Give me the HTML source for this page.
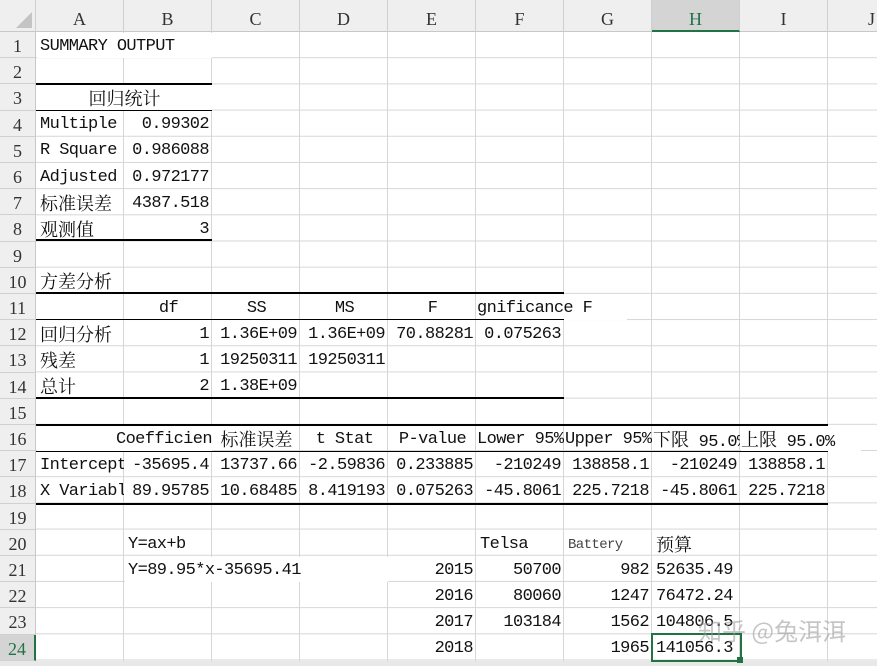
<!DOCTYPE html>
<html><head><meta charset="utf-8"><style>
*{margin:0;padding:0;box-sizing:border-box}
body{width:877px;height:666px;overflow:hidden;background:#fff;position:relative;font-family:"Liberation Mono","Noto Serif CJK SC",monospace;font-size:17px;letter-spacing:-0.6px;color:#111}
.grid{position:absolute;left:36px;top:32px;width:841px;height:630px;
background-image:linear-gradient(to right,#d6d6d6 1px,transparent 1px),linear-gradient(to bottom,#d6d6d6 1px,transparent 1px);
background-size:88px 26.2px;background-position:-1px -1px}
.colh{position:absolute;top:0;height:32px;background:#efefef;border-right:1px solid #d0d0d0;border-bottom:1px solid #c8c8c8;text-align:center;line-height:38px;font-family:"Liberation Serif",serif;font-size:18px;letter-spacing:0;color:#333}
.rowh{position:absolute;left:0;width:36px;background:#efefef;border-bottom:1px solid #d0d0d0;border-right:1px solid #c8c8c8;text-align:center;font-family:"Liberation Serif",serif;font-size:18px;letter-spacing:0;color:#333}
.c{position:absolute;height:25px;line-height:28px;white-space:nowrap;overflow:hidden;padding:0 3px}
.r{text-align:right}.m{text-align:center}
.k{font-family:"Liberation Serif","Noto Serif CJK SC",serif;font-size:18px;letter-spacing:0}
.ln{position:absolute;background:#000}
</style></head><body>
<div class="grid"></div>
<div class="colh" style="left:0;width:36px"><div style="position:absolute;right:3px;bottom:3px;width:0;height:0;border-left:16px solid transparent;border-bottom:16px solid #c4c4c4"></div></div>
<div class="colh" style="left:36px;width:88px">A</div>
<div class="colh" style="left:124px;width:88px">B</div>
<div class="colh" style="left:212px;width:88px">C</div>
<div class="colh" style="left:300px;width:88px">D</div>
<div class="colh" style="left:388px;width:88px">E</div>
<div class="colh" style="left:476px;width:88px">F</div>
<div class="colh" style="left:564px;width:88px">G</div>
<div class="colh" style="left:652px;width:88px;background:#d4d4d4;border-bottom:2px solid #217346;color:#217346">H</div>
<div class="colh" style="left:740px;width:88px">I</div>
<div class="colh" style="left:828px;width:60px;text-align:left;padding-left:40px">J</div>
<div class="rowh" style="top:32px;height:26.2px;line-height:28px">1</div>
<div class="rowh" style="top:58.2px;height:26.2px;line-height:28px">2</div>
<div class="rowh" style="top:84.4px;height:26.2px;line-height:28px">3</div>
<div class="rowh" style="top:110.6px;height:26.2px;line-height:28px">4</div>
<div class="rowh" style="top:136.8px;height:26.2px;line-height:28px">5</div>
<div class="rowh" style="top:163px;height:26.2px;line-height:28px">6</div>
<div class="rowh" style="top:189.2px;height:26.2px;line-height:28px">7</div>
<div class="rowh" style="top:215.4px;height:26.2px;line-height:28px">8</div>
<div class="rowh" style="top:241.6px;height:26.2px;line-height:28px">9</div>
<div class="rowh" style="top:267.8px;height:26.2px;line-height:28px">10</div>
<div class="rowh" style="top:294px;height:26.2px;line-height:28px">11</div>
<div class="rowh" style="top:320.2px;height:26.2px;line-height:28px">12</div>
<div class="rowh" style="top:346.4px;height:26.2px;line-height:28px">13</div>
<div class="rowh" style="top:372.6px;height:26.2px;line-height:28px">14</div>
<div class="rowh" style="top:398.8px;height:26.2px;line-height:28px">15</div>
<div class="rowh" style="top:425px;height:26.2px;line-height:28px">16</div>
<div class="rowh" style="top:451.2px;height:26.2px;line-height:28px">17</div>
<div class="rowh" style="top:477.4px;height:26.2px;line-height:28px">18</div>
<div class="rowh" style="top:503.6px;height:26.2px;line-height:28px">19</div>
<div class="rowh" style="top:529.8px;height:26.2px;line-height:28px">20</div>
<div class="rowh" style="top:556px;height:26.2px;line-height:28px">21</div>
<div class="rowh" style="top:582.2px;height:26.2px;line-height:28px">22</div>
<div class="rowh" style="top:608.4px;height:26.2px;line-height:28px">23</div>
<div class="rowh" style="top:634.6px;height:26.2px;line-height:28px;background:#d4d4d4;color:#217346;border-right:2px solid #217346">24</div>
<div style="position:absolute;left:0;top:661px;width:877px;height:5px;background:#e8e8e8"></div>

<div class="c" style="left:37px;top:33px;width:175px;background:#fff">SUMMARY OUTPUT</div>
<div class="c m k" style="left:37px;top:85px;width:175px;background:#fff">回归统计</div>
<div class="c" style="left:37px;top:111px;width:87px">Multiple R</div><div class="c r" style="left:125px;top:111px;width:87px">0.99302</div>
<div class="c" style="left:37px;top:137px;width:87px">R Square</div><div class="c r" style="left:125px;top:137px;width:87px">0.986088</div>
<div class="c" style="left:37px;top:164px;width:87px">Adjusted R</div><div class="c r" style="left:125px;top:164px;width:87px">0.972177</div>
<div class="c k" style="left:37px;top:190px;width:87px">标准误差</div><div class="c r" style="left:125px;top:190px;width:87px">4387.518</div>
<div class="c k" style="left:37px;top:216px;width:87px">观测值</div><div class="c r" style="left:125px;top:216px;width:87px">3</div>
<div class="c k" style="left:37px;top:268px;width:87px">方差分析</div>
<div class="c m" style="left:125px;top:295px;width:87px">df</div>
<div class="c m" style="left:213px;top:295px;width:87px">SS</div>
<div class="c m" style="left:301px;top:295px;width:87px">MS</div>
<div class="c m" style="left:389px;top:295px;width:87px">F</div>
<div class="c" style="left:477px;top:295px;width:150px;padding-left:0;background:#fff">gnificance F</div>
<div class="c k" style="left:37px;top:321px;width:87px">回归分析</div><div class="c r" style="left:125px;top:321px;width:87px">1</div><div class="c r" style="left:213px;top:321px;width:87px">1.36E+09</div><div class="c r" style="left:301px;top:321px;width:87px">1.36E+09</div><div class="c r" style="left:389px;top:321px;width:87px">70.88281</div><div class="c r" style="left:477px;top:321px;width:87px">0.075263</div>
<div class="c k" style="left:37px;top:347px;width:87px">残差</div><div class="c r" style="left:125px;top:347px;width:87px">1</div><div class="c r" style="left:213px;top:347px;width:87px">19250311</div><div class="c r" style="left:301px;top:347px;width:87px">19250311</div>
<div class="c k" style="left:37px;top:373px;width:87px">总计</div><div class="c r" style="left:125px;top:373px;width:87px">2</div><div class="c r" style="left:213px;top:373px;width:87px">1.38E+09</div>
<div class="c r" style="left:37px;top:426px;width:175px;background:#fff;padding-right:0">Coefficien</div>
<div class="c m k" style="left:213px;top:426px;width:87px">标准误差</div>
<div class="c m" style="left:301px;top:426px;width:87px">t Stat</div>
<div class="c m" style="left:389px;top:426px;width:87px">P-value</div>
<div class="c" style="left:477px;top:426px;width:87px;padding:0">Lower 95%</div>
<div class="c" style="left:565px;top:426px;width:87px;padding:0">Upper 95%</div>
<div class="c" style="left:653px;top:426px;width:87px;padding:0"><span class="k">下限</span> 95.0%</div>
<div class="c" style="left:741px;top:426px;width:120px;padding:0;background:#fff"><span class="k">上限</span> 95.0%</div>
<div class="c" style="left:37px;top:452px;width:87px;padding-right:0">Intercept</div><div class="c r" style="left:125px;top:452px;width:87px">-35695.4</div><div class="c r" style="left:213px;top:452px;width:87px">13737.66</div><div class="c r" style="left:301px;top:452px;width:87px">-2.59836</div><div class="c r" style="left:389px;top:452px;width:87px">0.233885</div><div class="c r" style="left:477px;top:452px;width:87px">-210249</div><div class="c r" style="left:565px;top:452px;width:87px">138858.1</div><div class="c r" style="left:653px;top:452px;width:87px">-210249</div><div class="c r" style="left:741px;top:452px;width:87px">138858.1</div>
<div class="c" style="left:37px;top:478px;width:87px;padding-right:0">X Variable</div><div class="c r" style="left:125px;top:478px;width:87px">89.95785</div><div class="c r" style="left:213px;top:478px;width:87px">10.68485</div><div class="c r" style="left:301px;top:478px;width:87px">8.419193</div><div class="c r" style="left:389px;top:478px;width:87px">0.075263</div><div class="c r" style="left:477px;top:478px;width:87px">-45.8061</div><div class="c r" style="left:565px;top:478px;width:87px">225.7218</div><div class="c r" style="left:653px;top:478px;width:87px">-45.8061</div><div class="c r" style="left:741px;top:478px;width:87px">225.7218</div>
<div class="c" style="left:125px;top:531px;width:87px">Y=ax+b</div>
<div class="c" style="left:477px;top:531px;width:87px">Telsa</div>
<div class="c" style="left:565px;top:531px;width:87px;font-size:14px;color:#444">Battery</div>
<div class="c k" style="left:653px;top:531px;width:87px">预算</div>
<div class="c" style="left:125px;top:557px;width:263px;background:#fff">Y=89.95*x-35695.41</div>
<div class="c r" style="left:389px;top:557px;width:87px">2015</div><div class="c r" style="left:477px;top:557px;width:87px">50700</div><div class="c r" style="left:565px;top:557px;width:87px">982</div><div class="c" style="left:653px;top:557px;width:87px">52635.49</div>
<div class="c r" style="left:389px;top:583px;width:87px">2016</div><div class="c r" style="left:477px;top:583px;width:87px">80060</div><div class="c r" style="left:565px;top:583px;width:87px">1247</div><div class="c" style="left:653px;top:583px;width:87px">76472.24</div>
<div class="c r" style="left:389px;top:609px;width:87px">2017</div><div class="c r" style="left:477px;top:609px;width:87px">103184</div><div class="c r" style="left:565px;top:609px;width:87px">1562</div><div class="c" style="left:653px;top:609px;width:87px">104806.5</div>
<div class="c r" style="left:389px;top:635px;width:87px">2018</div><div class="c r" style="left:565px;top:635px;width:87px">1965</div><div class="c" style="left:653px;top:635px;width:87px">141056.3</div>
<div style="position:absolute;left:651px;top:633px;width:91px;height:29px;border:2px solid #217346"></div>
<div style="position:absolute;left:737px;top:657px;width:6px;height:6px;background:#217346"></div>
<div style="position:absolute;left:698px;top:612px;font-family:'Noto Sans CJK SC',sans-serif;font-size:24px;letter-spacing:0;color:rgba(150,150,150,0.55);white-space:nowrap">知乎 @兔洱洱</div>

<div class="ln" style="left:36px;top:83px;width:176px;height:2px"></div>
<div class="ln" style="left:36px;top:110px;width:176px;height:1px"></div>
<div class="ln" style="left:36px;top:239px;width:176px;height:2px"></div>
<div class="ln" style="left:36px;top:292px;width:528px;height:2px"></div>
<div class="ln" style="left:36px;top:319px;width:528px;height:1px"></div>
<div class="ln" style="left:36px;top:397px;width:528px;height:2px"></div>
<div class="ln" style="left:36px;top:424px;width:792px;height:2px"></div>
<div class="ln" style="left:36px;top:451px;width:792px;height:1px"></div>
<div class="ln" style="left:36px;top:503px;width:792px;height:2px"></div>
</body></html>
